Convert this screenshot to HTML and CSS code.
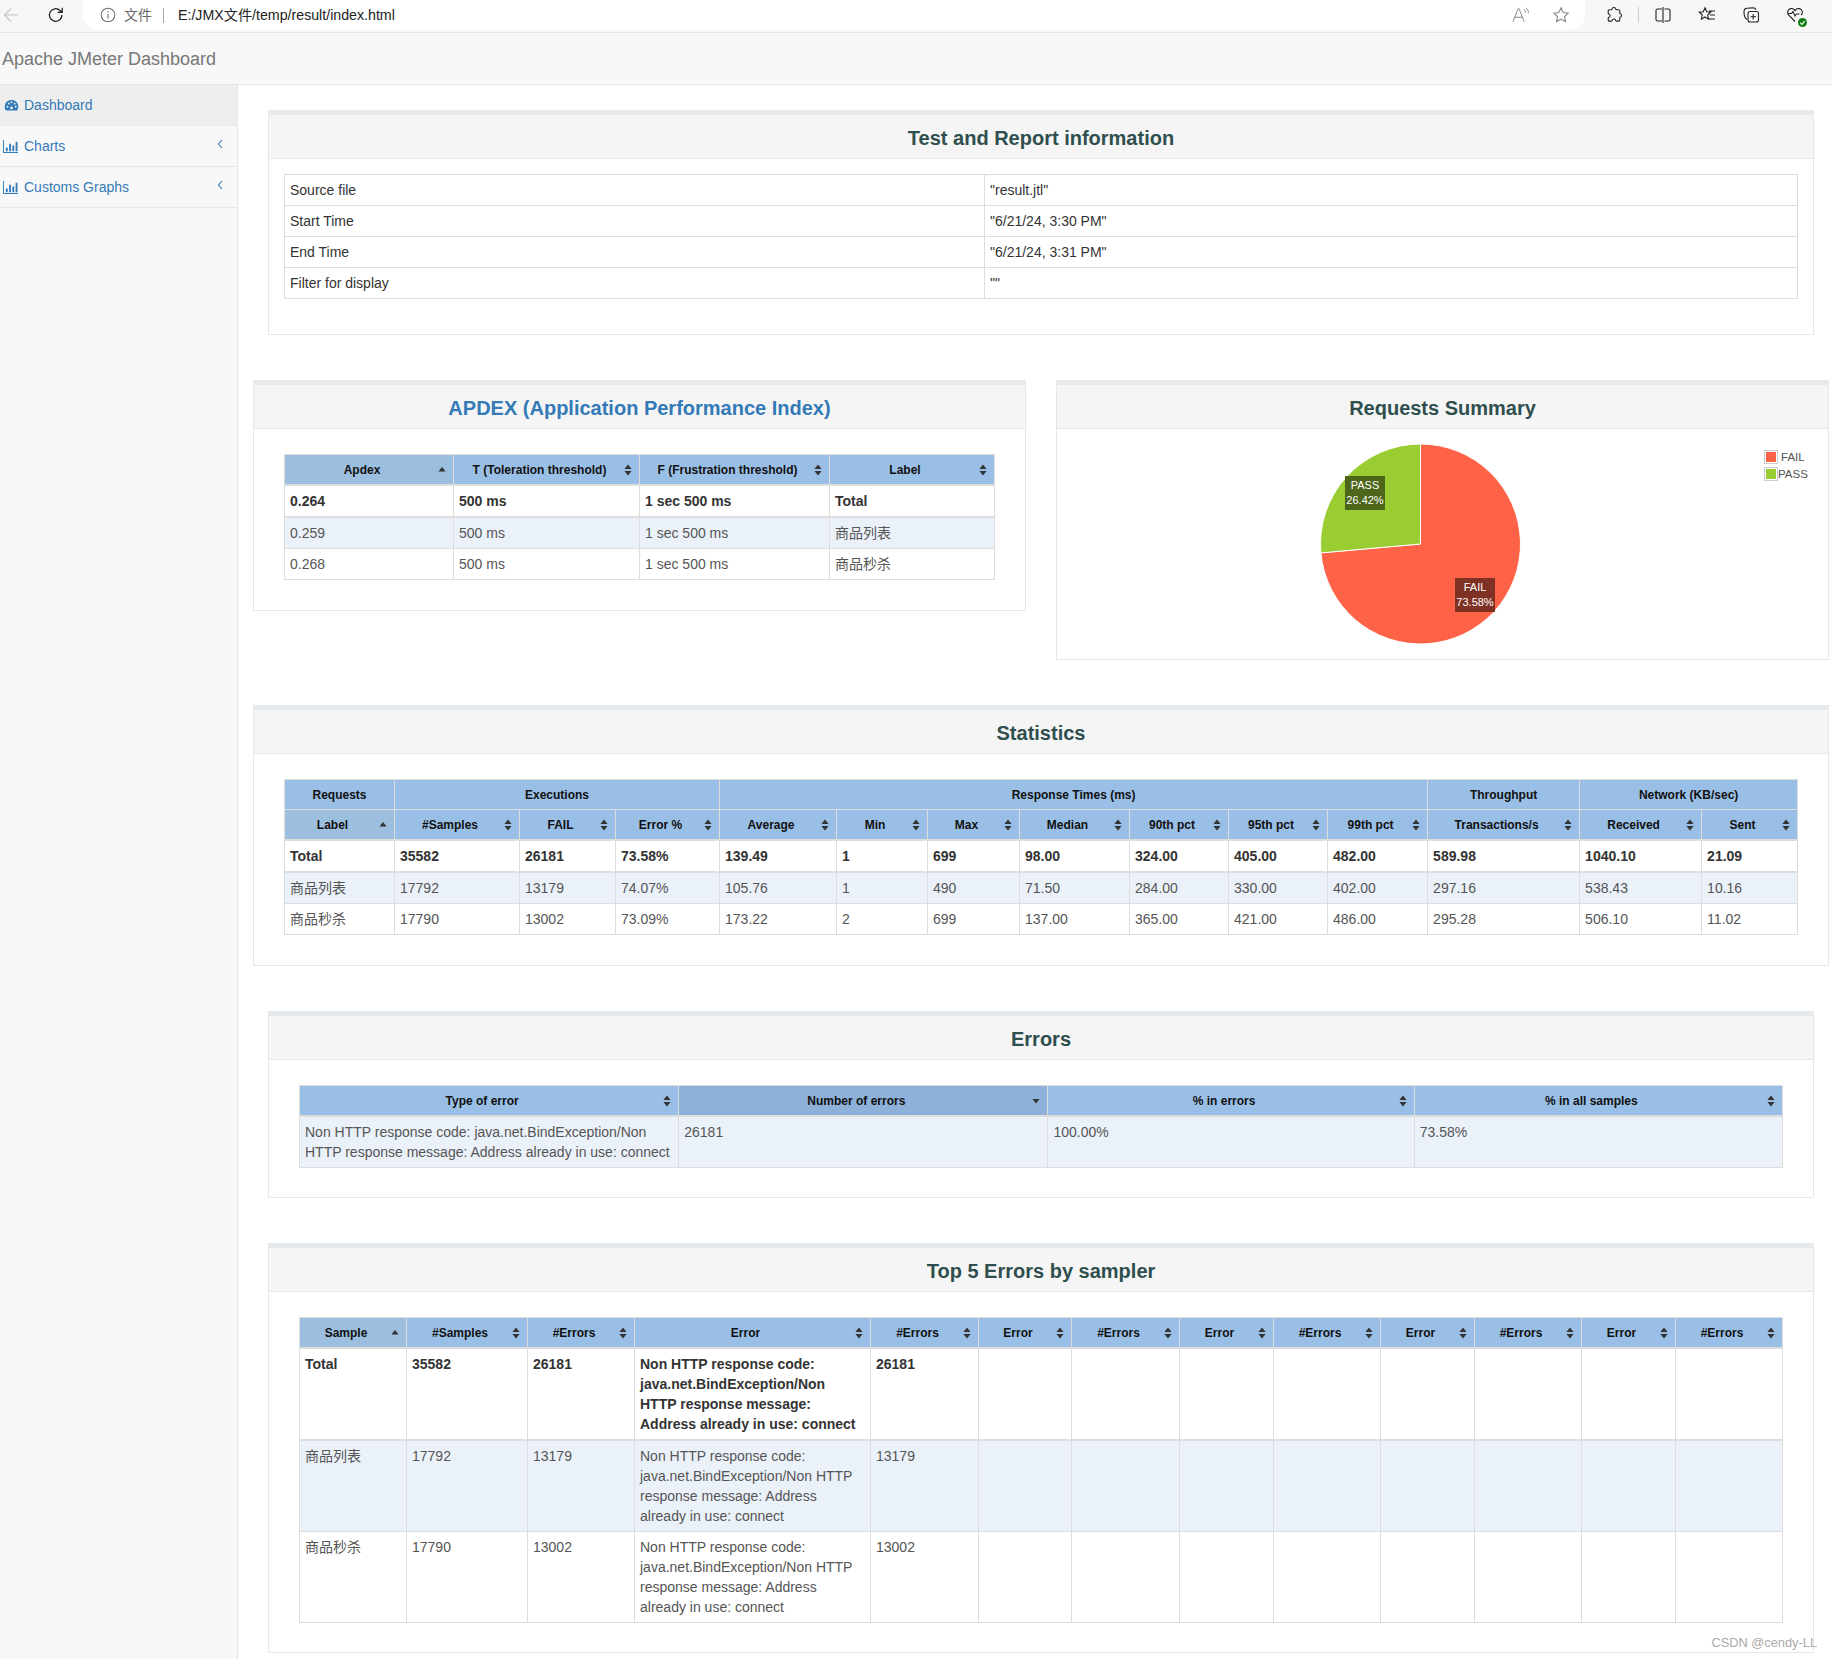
FILE: index.html
```html
<!DOCTYPE html>
<html lang="zh">
<head>
<meta charset="utf-8">
<title>Apache JMeter Dashboard</title>
<link rel="stylesheet" href="styles.css">
</head>
<body>
<svg class="defs" width="0" height="0" aria-hidden="true">
  <symbol id="both" viewBox="0 0 8 12"><path d="M4 0.500 7.600 5H.4zM4 11.500.4 7h7.200z"/></symbol>
  <symbol id="asc" viewBox="0 0 8 12"><path d="M4 3 7.600 7.500H.4z"/></symbol>
  <symbol id="desc" viewBox="0 0 8 12"><path d="M4 8.500.4 4h7.200z"/></symbol>
  <symbol id="bars" viewBox="0 0 16 14"><path d="M0 0h1v13h15v1H0z"/><path d="M3 8h2v4H3zM6.500 4h2v8h-2zM10 6h2v6h-2zM13.500 2h2v10h-2z"/></symbol>
</svg>

<header class="browser">
  <div class="nav-btns">
    <svg class="ico back" viewBox="0 0 18 18"><path d="M16 9H2.500M9 2.500 2.500 9 9 15.500"/></svg>
    <svg class="ico reload" viewBox="0 0 18 18"><path d="M15 9a6.300 6.300 0 1 1-2-4.600L15 6.300M15.200 1.800v4.600h-4.600"/></svg>
  </div>
  <div class="address">
    <svg class="ico info" viewBox="0 0 16 16"><circle cx="8" cy="8" r="6.800"/><path d="M8 7v4.600M8 4.200v1.400"/></svg>
    <span class="addr-label">文件</span>
    <span class="addr-sep"></span>
    <span class="addr-url">E:/JMX文件/temp/result/index.html</span>
    <span class="addr-tools">
      <svg class="ico grey" viewBox="0 0 20 18"><path d="M1 16.500 6.800 2h1L13.600 16.500M3 11.500h8.800M13 2.500c1.700.9 2.300 2.300 2 4M15.500 1c2.200 1.500 3 3.500 2.500 6"/></svg>
      <svg class="ico grey" viewBox="0 0 18 18"><path d="M9 1.800l2.200 4.700 5 .6-3.700 3.400 1 5.100L9 13.100l-4.500 2.500 1-5.100L1.800 7.100l5-.6z"/></svg>
    </span>
  </div>
  <div class="tools">
    <svg class="ico puzzle" viewBox="0 0 18 18"><path d="M7 3.200c.2-2.200 3.600-2.200 3.800 0 0 .4.300.6.700.6h2c.8 0 1.300.5 1.300 1.300v2c0 .4.200.7.600.7 1.500.2 1.500 3 0 3.200-.4 0-.6.300-.6.700v2.100c0 .8-.5 1.300-1.300 1.300h-2c-.4 0-.7-.2-.7-.6-.3-2-3.400-2-3.700 0 0 .4-.3.600-.7.600H4.500c-.8 0-1.300-.5-1.300-1.300V12c0-.4.300-.6.700-.7 1.700-.3 1.700-3 0-3.300-.4 0-.7-.3-.7-.7v-2.200c0-.8.500-1.300 1.300-1.300h1.800c.4 0 .7-.2.700-.6z"/></svg>
    <span class="tool-sep"></span>
    <svg class="ico" viewBox="0 0 18 18"><path d="M8 3H3.500A1.500 1.500 0 0 0 2 4.500v9A1.500 1.500 0 0 0 3.500 15H8M10.500 3h4A1.500 1.500 0 0 1 16 4.500v9a1.500 1.500 0 0 1-1.500 1.500h-4M9 1v16"/></svg>
    <svg class="ico" viewBox="0 0 18 18"><path d="M7 1.800l1.700 4 4 .4-3 2.800.9 4.200L7 11l-3.600 2.200.9-4.200-3-2.800 4-.4zM11 5h6M12 9h5M11 13h6"/></svg>
    <svg class="ico" viewBox="0 0 18 18"><path d="M5 13.500C3 12.500 2 9 2 5.500 2 3.500 3 2.500 5 2.300l6-.6c1.500 0 2.500.6 3 2"/><rect x="6" y="5.500" width="10.500" height="10.500" rx="2"/><path d="M11.200 8v5.500M8.500 10.700H14"/></svg>
    <span class="health">
      <svg class="ico" viewBox="0 0 18 18"><path d="M9 15.500 2.800 9.200C.8 7 1.500 3.400 4.500 2.600 6.300 2.200 8 3 9 4.600c1-1.600 2.700-2.400 4.500-2 3 .8 3.700 4.400 1.700 6.600M1.500 7.500h4l1.500-2 2 4.500 1.500-2h3"/></svg>
      <span class="health-badge"><svg viewBox="0 0 10 10"><path d="M2.500 5.200 4.300 7l3.300-3.600"/></svg></span>
    </span>
  </div>
</header>

<nav class="navbar"><span class="brand">Apache JMeter Dashboard</span></nav>

<div class="layout">
  <aside class="sidebar">
    <a class="side-item active">
      <svg class="side-ico gauge" viewBox="0 0 16 14"><path d="M8 1a7.300 7.300 0 0 0-6.400 10.900c.2.400.6.600 1 .6h10.800c.4 0 .8-.2 1-.6A7.300 7.300 0 0 0 8 1z"/><g class="gauge-dots"><circle cx="3.600" cy="8.400" r="1"/><circle cx="5" cy="4.800" r="1"/><circle cx="8" cy="3.500" r="1"/><circle cx="11.400" cy="5" r="1"/><circle cx="12.600" cy="8.400" r="1"/><circle cx="8" cy="9.600" r="1.500"/></g></svg>
      <span>Dashboard</span>
    </a>
    <a class="side-item">
      <svg class="side-ico"><use href="#bars"/></svg>
      <span>Charts</span>
      <svg class="chev" viewBox="0 0 6 10"><path d="M5 1 1.500 5 5 9"/></svg>
    </a>
    <a class="side-item">
      <svg class="side-ico"><use href="#bars"/></svg>
      <span>Customs Graphs</span>
      <svg class="chev" viewBox="0 0 6 10"><path d="M5 1 1.500 5 5 9"/></svg>
    </a>
  </aside>

  <main class="main">
    <section class="panel wide info-panel">
      <h2 class="panel-title">Test and Report information</h2>
      <div class="panel-body">
        <table class="plain">
          <colgroup><col width="700"><col width="813"></colgroup>
          <tr><td>Source file</td><td>"result.jtl"</td></tr>
          <tr><td>Start Time</td><td>"6/21/24, 3:30 PM"</td></tr>
          <tr><td>End Time</td><td>"6/21/24, 3:31 PM"</td></tr>
          <tr><td>Filter for display</td><td>""</td></tr>
        </table>
      </div>
    </section>

    <div class="two-col">
      <section class="panel half">
        <h2 class="panel-title link">APDEX (Application Performance Index)</h2>
        <div class="panel-body">
          <table class="data">
            <colgroup><col width="169"><col width="186"><col width="190"><col width="165"></colgroup>
            <thead><tr>
              <th class="sorted-asc">Apdex<svg class="sort"><use href="#asc"/></svg></th>
              <th>T (Toleration threshold)<svg class="sort"><use href="#both"/></svg></th>
              <th>F (Frustration threshold)<svg class="sort"><use href="#both"/></svg></th>
              <th>Label<svg class="sort"><use href="#both"/></svg></th>
            </tr></thead>
            <tbody>
              <tr class="total"><td>0.264</td><td>500 ms</td><td>1 sec 500 ms</td><td>Total</td></tr>
              <tr class="alt"><td>0.259</td><td>500 ms</td><td>1 sec 500 ms</td><td>商品列表</td></tr>
              <tr><td>0.268</td><td>500 ms</td><td>1 sec 500 ms</td><td>商品秒杀</td></tr>
            </tbody>
          </table>
        </div>
      </section>

      <section class="panel half">
        <h2 class="panel-title">Requests Summary</h2>
        <div class="chart-body">
          <svg class="pie" viewBox="0 0 771 229" width="771" height="229">
            <path class="fail" d="M363.500 115 L363.500 15 A100 100 0 1 1 263.900 123.900 Z"/>
            <path class="pass" d="M363.500 115 L263.900 123.900 A100 100 0 0 1 363.500 15 Z"/>
            <rect class="tag-pass" x="288" y="47" width="40" height="34"/>
            <text class="tag-text" x="308" y="60">PASS</text>
            <text class="tag-text" x="308" y="75">26.42%</text>
            <rect class="tag-fail" x="398" y="149" width="40" height="34"/>
            <text class="tag-text" x="418" y="162">FAIL</text>
            <text class="tag-text" x="418" y="177">73.58%</text>
            <rect class="swatch-box" x="707.500" y="21.500" width="13" height="13"/>
            <rect class="fail" x="709" y="23" width="10" height="10"/>
            <text class="legend-text" x="724" y="32">FAIL</text>
            <rect class="swatch-box" x="707.500" y="38.500" width="13" height="13"/>
            <rect class="pass" x="709" y="40" width="10" height="10"/>
            <text class="legend-text" x="721" y="49">PASS</text>
          </svg>
        </div>
      </section>
    </div>

    <section class="panel full">
      <h2 class="panel-title">Statistics</h2>
      <div class="panel-body">
        <table class="data">
          <colgroup><col width="110"><col width="125"><col width="96"><col width="104"><col width="117"><col width="91"><col width="92"><col width="110"><col width="99"><col width="99"><col width="100"><col width="152"><col width="122"><col width="96"></colgroup>
          <thead>
            <tr class="group">
              <th>Requests</th><th colspan="3">Executions</th><th colspan="7">Response Times (ms)</th><th>Throughput</th><th colspan="2">Network (KB/sec)</th>
            </tr>
            <tr class="head-last">
              <th class="sorted-asc">Label<svg class="sort"><use href="#asc"/></svg></th>
              <th>#Samples<svg class="sort"><use href="#both"/></svg></th>
              <th>FAIL<svg class="sort"><use href="#both"/></svg></th>
              <th>Error %<svg class="sort"><use href="#both"/></svg></th>
              <th>Average<svg class="sort"><use href="#both"/></svg></th>
              <th>Min<svg class="sort"><use href="#both"/></svg></th>
              <th>Max<svg class="sort"><use href="#both"/></svg></th>
              <th>Median<svg class="sort"><use href="#both"/></svg></th>
              <th>90th pct<svg class="sort"><use href="#both"/></svg></th>
              <th>95th pct<svg class="sort"><use href="#both"/></svg></th>
              <th>99th pct<svg class="sort"><use href="#both"/></svg></th>
              <th>Transactions/s<svg class="sort"><use href="#both"/></svg></th>
              <th>Received<svg class="sort"><use href="#both"/></svg></th>
              <th>Sent<svg class="sort"><use href="#both"/></svg></th>
            </tr>
          </thead>
          <tbody>
            <tr class="total"><td>Total</td><td>35582</td><td>26181</td><td>73.58%</td><td>139.49</td><td>1</td><td>699</td><td>98.00</td><td>324.00</td><td>405.00</td><td>482.00</td><td>589.98</td><td>1040.10</td><td>21.09</td></tr>
            <tr class="alt"><td>商品列表</td><td>17792</td><td>13179</td><td>74.07%</td><td>105.76</td><td>1</td><td>490</td><td>71.50</td><td>284.00</td><td>330.00</td><td>402.00</td><td>297.16</td><td>538.43</td><td>10.16</td></tr>
            <tr><td>商品秒杀</td><td>17790</td><td>13002</td><td>73.09%</td><td>173.22</td><td>2</td><td>699</td><td>137.00</td><td>365.00</td><td>421.00</td><td>486.00</td><td>295.28</td><td>506.10</td><td>11.02</td></tr>
          </tbody>
        </table>
      </div>
    </section>

    <section class="panel wide">
      <h2 class="panel-title">Errors</h2>
      <div class="panel-body tight-bottom">
        <table class="data">
          <colgroup><col width="379"><col width="369"><col width="366"><col width="368"></colgroup>
          <thead><tr>
            <th>Type of error<svg class="sort"><use href="#both"/></svg></th>
            <th class="sorted-desc">Number of errors<svg class="sort"><use href="#desc"/></svg></th>
            <th>% in errors<svg class="sort"><use href="#both"/></svg></th>
            <th>% in all samples<svg class="sort"><use href="#both"/></svg></th>
          </tr></thead>
          <tbody>
            <tr class="alt"><td>Non HTTP response code: java.net.BindException/Non HTTP response message: Address already in use: connect</td><td>26181</td><td>100.00%</td><td>73.58%</td></tr>
          </tbody>
        </table>
      </div>
    </section>

    <section class="panel wide">
      <h2 class="panel-title">Top 5 Errors by sampler</h2>
      <div class="panel-body tight-bottom">
        <table class="data">
          <colgroup><col width="107"><col width="121"><col width="107"><col width="236"><col width="108"><col width="93"><col width="108"><col width="94"><col width="107"><col width="94"><col width="107"><col width="94"><col width="107"></colgroup>
          <thead><tr>
            <th class="sorted-asc">Sample<svg class="sort"><use href="#asc"/></svg></th>
            <th>#Samples<svg class="sort"><use href="#both"/></svg></th>
            <th>#Errors<svg class="sort"><use href="#both"/></svg></th>
            <th>Error<svg class="sort"><use href="#both"/></svg></th>
            <th>#Errors<svg class="sort"><use href="#both"/></svg></th>
            <th>Error<svg class="sort"><use href="#both"/></svg></th>
            <th>#Errors<svg class="sort"><use href="#both"/></svg></th>
            <th>Error<svg class="sort"><use href="#both"/></svg></th>
            <th>#Errors<svg class="sort"><use href="#both"/></svg></th>
            <th>Error<svg class="sort"><use href="#both"/></svg></th>
            <th>#Errors<svg class="sort"><use href="#both"/></svg></th>
            <th>Error<svg class="sort"><use href="#both"/></svg></th>
            <th>#Errors<svg class="sort"><use href="#both"/></svg></th>
          </tr></thead>
          <tbody>
            <tr class="total"><td>Total</td><td>35582</td><td>26181</td><td>Non HTTP response code: java.net.BindException/Non HTTP response message: Address already in use: connect</td><td>26181</td><td></td><td></td><td></td><td></td><td></td><td></td><td></td><td></td></tr>
            <tr class="alt"><td>商品列表</td><td>17792</td><td>13179</td><td>Non HTTP response code: java.net.BindException/Non HTTP response message: Address already in use: connect</td><td>13179</td><td></td><td></td><td></td><td></td><td></td><td></td><td></td><td></td></tr>
            <tr><td>商品秒杀</td><td>17790</td><td>13002</td><td>Non HTTP response code: java.net.BindException/Non HTTP response message: Address already in use: connect</td><td>13002</td><td></td><td></td><td></td><td></td><td></td><td></td><td></td><td></td></tr>
          </tbody>
        </table>
      </div>
      <span class="watermark">CSDN @cendy-LL</span>
    </section>
  </main>
</div>
</body>
</html>
```

FILE: styles.css
```css
* { box-sizing: border-box; }
html, body { margin: 0; padding: 0; }
body {
  width: 1832px;
  height: 1659px;
  overflow: hidden;
  background: #fff;
  color: #555;
  font: 14px/20px "Liberation Sans", Arial, "Noto Sans CJK SC", sans-serif;
}
.defs { position: absolute; }

/* browser chrome */
.browser {
  display: flex;
  align-items: flex-start;
  height: 33px;
  background: #f7f7f7;
  border-bottom: 1px solid #e6e6e6;
}
.ico { width: 18px; height: 18px; fill: none; stroke: #222; stroke-width: 1.1; display: block; }
.nav-btns { display: flex; align-items: center; gap: 27px; width: 83px; height: 30px; padding-left: 2px; flex: none; }
.back { stroke: #c4c4c4; }
.reload { stroke: #222; stroke-width: 1.3; }
.address {
  display: flex;
  align-items: center;
  width: 1502px;
  height: 30px;
  padding-left: 17px;
  background: #fff;
  border-radius: 0 0 16px 16px / 0 0 15px 15px;
  font-size: 14px;
  color: #222;
  flex: none;
}
.info { width: 16px; height: 16px; stroke: #6f6f6f; }
.addr-label { margin-left: 8px; color: #666; }
.addr-sep { width: 1px; height: 15px; background: #aaa; margin: 0 14px 0 11px; }
.addr-url { font-size: 14.200px; }
.addr-tools { display: flex; gap: 22px; margin-left: auto; margin-right: 15px; }
.grey { stroke: #8a8a8a; width: 18px; height: 18px; }
.tools { display: flex; align-items: center; height: 30px; padding-left: 20px; }
.tools > .ico { margin-right: 26px; }
.tools > .puzzle { margin-right: 15px; stroke-linejoin: round; }
.tool-sep { width: 1px; height: 16px; background: #ccc; margin-right: 15px; }
.health { position: relative; margin-left: 0; }
.health-badge {
  position: absolute;
  right: -3px;
  bottom: -3px;
  width: 9px;
  height: 9px;
  border-radius: 50%;
  background: #107c10;
}
.health-badge svg { display: block; width: 9px; height: 9px; fill: none; stroke: #fff; stroke-width: 1.300; }

/* navbar */
.navbar {
  height: 52px;
  padding: 0 2px;
  display: flex;
  align-items: center;
  background: #f8f8f8;
  border-bottom: 1px solid #e7e7e7;
}
.brand { font-size: 18px; color: #777; }

/* layout */
.layout { display: flex; height: 1574px; }
.sidebar {
  width: 238px;
  flex: none;
  background: #f8f8f8;
  border-right: 1px solid #e7e7e7;
}
.side-item {
  display: flex;
  align-items: center;
  height: 41px;
  padding: 0 0 0 3px;
  color: #337ab7;
  border-bottom: 1px solid #e7e7e7;
}
.side-item.active { background: #eee; }
.side-ico { width: 15px; height: 13px; margin-right: 6px; fill: #337ab7; flex: none; }
.gauge { margin-left: 1px; margin-right: 5px; }
.gauge-dots { fill: #eee; }
.chev { width: 6px; height: 10px; margin-left: auto; margin-right: 14px; margin-top: -5px; fill: none; stroke: #337ab7; stroke-width: 1.100; }

.main { flex: 1; min-width: 0; padding-top: 25px; position: relative; }

/* panels */
.panel {
  position: relative;
  background: #fff;
  border: 1px solid #e7e7e7;
  border-top: 5px solid #e7eaec;
}
.wide { width: 1546px; margin: 0 0 45px 30px; }
.full { width: 1576px; margin: 0 0 45px 15px; }
.two-col { display: flex; align-items: flex-start; gap: 30px; margin: 0 0 45px 15px; }
.half { width: 773px; }
.panel-title {
  margin: 0;
  height: 44px;
  background: #f5f5f5;
  border-bottom: 1px solid #e7e7e7;
  text-align: center;
  font-size: 20px;
  line-height: 46px;
  font-weight: bold;
  color: #2f4f4f;
}
.panel-title.link { color: #337ab7; }
.panel-body { padding: 25px 30px 30px; }
.tight-bottom { padding-bottom: 29px; }
.info-panel .panel-body { padding: 15px 15px 35px; }
.chart-body { height: 230px; }
.pie { display: block; }
.fail { fill: #ff6347; }
.pass { fill: #9acd32; }
.pie path { stroke: #fff; stroke-width: 1; }
.tag-pass { fill: #4d6619; }
.tag-fail { fill: #7f3123; }
.tag-text { fill: #fff; font-size: 11px; text-anchor: middle; }
.legend-text { fill: #545454; font-size: 11.500px; }
.swatch-box { fill: #fff; stroke: #ccc; }

/* tables */
table { border-collapse: collapse; table-layout: fixed; width: 100%; }
td, th { border: 1px solid #ddd; }
td { padding: 5px; vertical-align: top; }
.plain td { color: #333; }
th {
  position: relative;
  padding: 4.500px 19px 4.500px 5px;
  background: #99bfe6;
  color: #111;
  font-size: 12px;
  font-weight: bold;
  text-align: center;
}
thead tr:last-child th { border-bottom: 2px solid #ddd; }
.group th { padding-right: 5px; }
.sorted-asc { background: #9dbfdf; }
.sorted-desc { background: #8db1d9; }
.sort { position: absolute; right: 7px; top: 50%; width: 8px; height: 12px; margin-top: -6px; fill: #333; }
.alt td { background: #ebf1f9; }
.total td { font-weight: bold; color: #333; border-bottom: 2px solid #ddd; }

.watermark {
  position: absolute;
  right: -4px;
  bottom: -1px;
  font-size: 12.800px;
  color: #aaa;
}
```
